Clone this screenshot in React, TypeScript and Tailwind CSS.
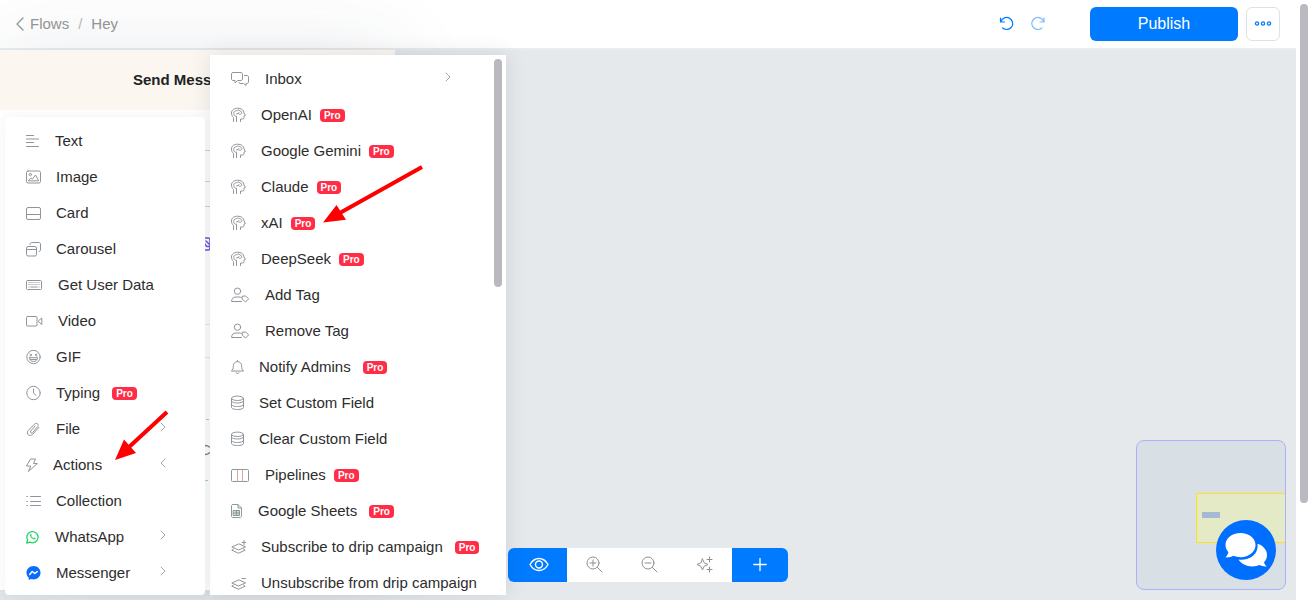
import type { ReactNode } from 'react';

type Item = {
  label: string;
  icon: ReactNode;
  pro?: 'near' | 'far';
  arrow?: 'left' | 'right';
};

type IconProps = { w: number; h?: number; className?: string; children: ReactNode };

function Icon({ w, h = 16, className = '', children }: IconProps) {
  return (
    <svg
      width={w}
      height={h}
      viewBox={`0 0 ${w} ${h}`}
      fill="none"
      stroke="currentColor"
      strokeLinecap="round"
      strokeLinejoin="round"
      className={`shrink-0 ${className}`}
      aria-hidden="true"
    >
      {children}
    </svg>
  );
}

const headIcon = (
  <Icon w={15}>
    <path d="M2.500 14.500v-4C1.200 9.300.5 7.800.5 6 .5 3 3 1.200 6.700 1.200c3.600 0 6 1.800 6.300 4.600l1.300 2.700-1.300.5v1.700c0 .8-.6 1.300-1.300 1.300H9.500v2.500" />
    <path d="M5.500 14.500V9.300C3.600 9.300 2.500 8 2.800 6.500 2.600 4.800 3.800 3.700 5.200 3.800c1.300-1 3-.8 3.800.1 1.400.1 2.100 1.400 1.600 2.500-.5 1-1.700 1.100-2.600.8M5.500 7L8 5.800" />
  </Icon>
);

const userTagIcon = (
  <Icon w={19}>
    <circle cx="6.500" cy="4.200" r="3.200" />
    <path d="M10.500 14.500H.6c0-3 1.800-4.500 4.400-4.500h3c.9 0 1.600.2 2.200.5" />
    <path d="M11.500 9.200l3.200-.2 3 2.800-3.200 3.200-3-2.600z" />
  </Icon>
);

const databaseIcon = (
  <Icon w={13}>
    <ellipse cx="6.500" cy="3.300" rx="6" ry="2.200" />
    <path d="M.5 3.500v9c0 1.200 2.700 2 6 2s6-.8 6-2v-9M.5 6c0 1.200 2.700 2 6 2s6-.8 6-2M.5 9.500c0 1.200 2.700 2 6 2s6-.8 6-2" />
  </Icon>
);

function LayersIcon({ minus }: { minus?: boolean }) {
  return (
    <Icon w={15}>
      <path d="M7.500 5L.8 8l6.700 3 6.700-3zM2.500 10L.8 11.200l6.700 3 6.700-3-1.700-1.200" />
      <path d={minus ? 'M11 3.500h3.500' : 'M11 3.500h4M13 1.500v4'} />
    </Icon>
  );
}

const MESSAGE_ITEMS: Item[] = [
  {
    label: 'Text',
    icon: (
      <Icon w={14}>
        <path d="M.5 2.500h7M.5 6h12M.5 9.500h7M.5 13.500h12" />
      </Icon>
    ),
  },
  {
    label: 'Image',
    icon: (
      <Icon w={15}>
        <rect x=".5" y="2" width="14" height="12" rx="1.500" />
        <circle cx="4.300" cy="5.500" r="1.200" />
        <path d="M2.500 11.500l2.500-2.500 1.500 1L9.500 6l3 5.500z" />
      </Icon>
    ),
  },
  {
    label: 'Card',
    icon: (
      <Icon w={15}>
        <rect x=".5" y="2.500" width="14" height="12" rx="1.500" />
        <path d="M.5 9.500h14" />
      </Icon>
    ),
  },
  {
    label: 'Carousel',
    icon: (
      <Icon w={15}>
        <rect x=".5" y="5.500" width="10" height="9.500" rx="1.500" />
        <path d="M.5 8.500h10M4 3.500V3c0-.8.700-1.500 1.500-1.500H13c.8 0 1.500.7 1.500 1.500v6c0 .8-.7 1.500-1.500 1.500" />
      </Icon>
    ),
  },
  {
    label: 'Get User Data',
    icon: (
      <Icon w={17}>
        <rect x=".5" y="3.500" width="15" height="9" rx="1" />
        <path d="M2.500 5.500h11M2.500 7.500h11" strokeDasharray="1 1" strokeLinecap="butt" />
        <path d="M2.500 10h1M4.500 10h7M12.500 10h1" strokeLinecap="butt" />
      </Icon>
    ),
  },
  {
    label: 'Video',
    icon: (
      <Icon w={17}>
        <rect x=".5" y="3.500" width="10.500" height="9.500" rx="1" />
        <path d="M12.800 7.500l3-2.500v6.500l-3-2.500z" />
      </Icon>
    ),
  },
  {
    label: 'GIF',
    icon: (
      <Icon w={15}>
        <circle cx="7.500" cy="8" r="6.700" />
        <path d="M3.500 8.700h8c0 2.300-1.700 3.800-4 3.800s-4-1.500-4-3.800zM4.500 10.500h6M4 5l2 1-2 1M11 5L9 6l2 1" />
      </Icon>
    ),
  },
  {
    label: 'Typing',
    pro: 'far',
    icon: (
      <Icon w={15}>
        <circle cx="7.500" cy="8" r="6.700" />
        <path d="M7.500 4v4l2.500 2.200" />
      </Icon>
    ),
  },
  {
    label: 'File',
    arrow: 'right',
    icon: (
      <Icon w={15}>
        <path d="M9 5L4.800 10c-1.100 1.400.5 2.800 1.800 1.600l5-6c1.900-2.500-1.200-4.600-3.300-2.300L2.200 9.600c-2.600 3.500 1.300 6.700 4.500 3.700L13 6.300" />
      </Icon>
    ),
  },
  {
    label: 'Actions',
    arrow: 'left',
    icon: (
      <Icon w={12}>
        <path d="M5 2h4.500L7.500 6.500h3.800L2.500 14.500l2.300-5.500H.8z" />
      </Icon>
    ),
  },
  {
    label: 'Collection',
    icon: (
      <Icon w={15}>
        <path d="M4.500 3.500h10M4.500 8.500h10M4.500 12.500h10M.8 3.500h.7M.8 8.500h.7M.8 12.500h.7" />
      </Icon>
    ),
  },
  {
    label: 'WhatsApp',
    arrow: 'right',
    icon: (
      <Icon w={14} className="text-[#25d366]">
        <path d="M.8 14l.8-3A5.600 5.600 0 1 1 3.900 13.200z" strokeWidth="1.300" />
        <path d="M4.200 5.200c.6-.7 1-.4 1.500 1.100l-.5.8c.6 1 1.300 1.700 2.400 2.100l.8-.8c1.500.6 1.600.9.8 1.700-2 1.400-6.200-2.800-5-4.900z" fill="currentColor" stroke="none" />
      </Icon>
    ),
  },
  {
    label: 'Messenger',
    arrow: 'right',
    icon: (
      <Icon w={15} className="text-[#0a6cff]">
        <path d="M7.500 1C3.500 1 .5 4 .5 7.700c0 2 .8 3.700 2.200 4.900v2.400l2.300-.9c.8.200 1.600.3 2.500.3 4 0 7-2.900 7-6.700S11.500 1 7.500 1z" fill="currentColor" stroke="none" />
        <path d="M3.700 9.500L6.200 6.500l2.600 2 2.500-2" stroke="#fff" strokeWidth="1.500" />
      </Icon>
    ),
  },
];

const ACTION_ITEMS: Item[] = [
  {
    label: 'Inbox',
    arrow: 'right',
    icon: (
      <Icon w={19}>
        <path d="M2 1.500h8c.8 0 1.500.7 1.500 1.500v5c0 .8-.7 1.500-1.500 1.500H6.500L4 12V9.500H2C1.200 9.500.5 8.800.5 8V3c0-.8.700-1.500 1.500-1.500z" />
        <path d="M13.500 4.500H16c.8 0 1.500.7 1.500 1.500v5c0 .8-.7 1.500-1.500 1.500h-1v2l-2.500-2H9.200c-.7 0-1.200-.5-1.200-1.200" />
      </Icon>
    ),
  },
  { label: 'OpenAI', pro: 'near', icon: headIcon },
  { label: 'Google Gemini', pro: 'near', icon: headIcon },
  { label: 'Claude', pro: 'near', icon: headIcon },
  { label: 'xAI', pro: 'near', icon: headIcon },
  { label: 'DeepSeek', pro: 'near', icon: headIcon },
  { label: 'Add Tag', icon: userTagIcon },
  { label: 'Remove Tag', icon: userTagIcon },
  {
    label: 'Notify Admins',
    pro: 'far',
    icon: (
      <Icon w={13}>
        <path d="M6.500 1.500v1M.7 11.800c1.400-1.200 1.600-2.300 1.600-5a4.200 4.200 0 0 1 8.400 0c0 2.700.2 3.800 1.600 5zM5 13.700c.3 1.200 2.700 1.200 3 0" />
      </Icon>
    ),
  },
  { label: 'Set Custom Field', icon: databaseIcon },
  { label: 'Clear Custom Field', icon: databaseIcon },
  {
    label: 'Pipelines',
    pro: 'near',
    icon: (
      <Icon w={19}>
        <rect x=".5" y="2.500" width="17" height="12" rx="1" />
        <path d="M6.500 3v11M11.500 3v11" className="stroke-[#d9a79a]" />
      </Icon>
    ),
  },
  {
    label: 'Google Sheets',
    pro: 'far',
    icon: (
      <Icon w={12}>
        <path d="M2 1.500h5l3.500 3.500v8c0 .8-.5 1.500-1.500 1.500H2c-1 0-1.500-.7-1.500-1.500V3c0-1 .5-1.500 1.500-1.500zM7 1.500V5h3.500" className="stroke-[#83a391]" />
        <rect x="2.500" y="7.500" width="6" height="5" className="fill-[#cfd8d3]" />
        <path d="M2.500 10h6M5.500 7.500v5" />
      </Icon>
    ),
  },
  { label: 'Subscribe to drip campaign', pro: 'far', icon: <LayersIcon /> },
  { label: 'Unsubscribe from drip campaign', icon: <LayersIcon minus /> },
];

function MenuItem({ item }: { item: Item }) {
  return (
    <li>
      <button type="button" className="flex h-9 w-full items-center whitespace-nowrap text-left">
        <span className="mr-[15px] text-[#8f959c]">{item.icon}</span>
        <span>{item.label}</span>
        {item.pro ? (
          <span
            className={`mt-px rounded bg-[#ff2d46] px-1 text-[10px] font-bold leading-[13px] text-white ${
              item.pro === 'far' ? 'ml-3' : 'ml-2'
            }`}
          >
            Pro
          </span>
        ) : null}
        {item.arrow ? (
          <Icon w={6} h={10} className="mb-1 ml-auto text-[#a2a7ac]">
            <path d={item.arrow === 'right' ? 'M1 1l4 4-4 4' : 'M5 1L1 5l4 4'} />
          </Icon>
        ) : null}
      </button>
    </li>
  );
}

function Header() {
  return (
    <header className="flex h-[50px] shrink-0 items-center border-b-2 border-[#eaedef] bg-white pl-4 pr-4">
      <nav className="flex flex-1 items-center text-[#969696]" aria-label="Breadcrumb">
        <a href="#flows" className="flex items-center gap-1.5">
          <Icon w={8} h={14}>
            <path d="M7 1L1 7l6 6" strokeWidth="1.300" />
          </Icon>
          Flows
        </a>
        <span className="mx-[9px] text-[#b9bdc1]">/</span>
        <a href="#hey">Hey</a>
      </nav>
      <div className="flex items-center text-[#007bff]">
        <button type="button" aria-label="Undo" className="mr-4">
          <Icon w={15}>
            <path d="M1.500 2v4h4M2 5.500A6 6 0 1 1 3.700 12" strokeWidth="1.200" />
          </Icon>
        </button>
        <button type="button" aria-label="Redo" className="mr-[45px] opacity-50">
          <Icon w={15}>
            <path d="M14 2v4h-4M13.500 5.500A6 6 0 1 0 11.800 12" strokeWidth="1.200" />
          </Icon>
        </button>
        <button
          type="button"
          className="h-[34px] w-[148px] rounded-md bg-[#007bff] text-base text-white"
        >
          Publish
        </button>
        <button
          type="button"
          aria-label="More"
          className="ml-2 flex size-[34px] items-center justify-center rounded-md border border-[#dee2e6]"
        >
          <Icon w={18} h={6}>
            <circle cx="3" cy="2.500" r="1.600" strokeWidth="1.300" />
            <circle cx="9" cy="2.500" r="1.600" strokeWidth="1.300" />
            <circle cx="15" cy="2.500" r="1.600" strokeWidth="1.300" />
          </Icon>
        </button>
      </div>
    </header>
  );
}

/** Side panel of the selected node; the add-content menus open over it. */
function NodePanel() {
  return (
    <section className="mb-2.5 flex w-[395px] shrink-0 flex-col bg-white shadow-[0_0_80px_rgba(40,60,90,0.1)]">
      <h1 className="bg-[#fbf6f0] pl-[133px] font-bold leading-[60px] text-[#222]">Send Message</h1>
      <div className="mx-4 h-[41px] border-b border-[#ced4da]" />
      <div className="mx-4 h-[31px] border-b border-[#ced4da]" />
      <div className="mx-4 h-[25px] border-b border-[#ced4da]" />
      <div className="mx-4 flex h-[118px] items-start border-b border-[#e8eaec] pl-[181px] pt-[30px] text-[#6a5be2]">
        <Icon w={14} h={14}>
          <rect x="1" y="1" width="12" height="12" rx="2" strokeWidth="1.500" />
          <path d="M9 4l3 3M8 7c1 3 3 3 5 2" strokeWidth="1.500" />
        </Icon>
      </div>
      <div className="mx-4 h-[33px] border-b border-[#e8eaec]" />
      <div className="ml-[206px] mr-4 h-[62px] border-b border-dashed border-[#a9c9ea]" />
      <div className="ml-[200px] mr-4 h-[61px] border-b border-dashed border-[#a9c9ea] leading-[60px] text-[#777]">
        Content
      </div>
    </section>
  );
}

function CanvasToolbar() {
  return (
    <div className="absolute bottom-[18px] left-1/2 flex h-[34px] -translate-x-1/2 overflow-hidden rounded-md bg-white text-[#8f8f8f]">
      <button type="button" aria-label="Preview" className="flex w-[59px] items-center justify-center bg-[#007bff] pl-0.5 text-white">
        <Icon w={20}>
          <path d="M1 7.500C3 4 6 1.500 10 1.500s7 2.500 9 6c-2 3.500-5 6-9 6s-7-2.500-9-6z" strokeWidth="1.400" />
          <circle cx="10" cy="7.500" r="3.500" strokeWidth="1.400" />
        </Icon>
      </button>
      <button type="button" aria-label="Zoom in" className="flex w-[55px] items-center justify-center">
        <Icon w={17} h={18}>
          <circle cx="7" cy="7" r="6" />
          <path d="M11.500 11.500l4.500 4.500M4 7h6M7 4v6" />
        </Icon>
      </button>
      <button type="button" aria-label="Zoom out" className="flex w-[55px] items-center justify-center">
        <Icon w={17} h={18}>
          <circle cx="7" cy="7" r="6" />
          <path d="M11.500 11.500l4.500 4.500M4 7h6" />
        </Icon>
      </button>
      <button type="button" aria-label="Arrange" className="flex w-[55px] items-center justify-center">
        <Icon w={17} h={18}>
          <path d="M6.500 3l1.700 3.800L12 8.500l-3.800 1.700L6.500 14l-1.700-3.800L1 8.500l3.800-1.700zM13.500 1v5M11 3.500h5M13.500 11v5M11 13.500h5" />
        </Icon>
      </button>
      <button type="button" aria-label="Add" className="flex w-14 items-center justify-center bg-[#007bff] text-white">
        <Icon w={14} h={14}>
          <path d="M7 .5v12M.8 6.500h12.400" strokeWidth="1.300" />
        </Icon>
      </button>
    </div>
  );
}

function MiniMap() {
  return (
    <div className="absolute bottom-2.5 right-2.5 size-[150px] overflow-hidden rounded-lg border border-[#abb2fb] bg-[#d8e0e6]">
      <div className="ml-[59px] mt-[52px] h-[50px] border border-r-0 border-[#ffe11a] bg-[#e5eac6] pl-[5px] pt-[18px]">
        <div className="h-1.5 w-[18px] bg-[#a6b9d2]" />
      </div>
    </div>
  );
}

function ChatButton() {
  return (
    <button
      type="button"
      aria-label="Chat"
      className="absolute bottom-5 right-5 flex size-[60px] items-center justify-center rounded-full bg-[#006fff]"
    >
      <svg width="42" height="34" viewBox="0 0 42 34" fill="#fff" aria-hidden="true">
        <path d="M15.500 0C24 0 30.500 5.300 30.500 12S24 24.200 15.500 24.200c-2.600 0-5-.5-7.200-1.400C6 24 3.500 24.600.3 24.300c1.700-1.500 2.800-3.400 3.100-5.100C1.600 17.200.5 14.700.5 12 .500 5.300 7 0 15.500 0z" />
        <path d="M32.600 10.800C38.200 12.600 42 17 42 22c0 2.800-1.100 5.300-3 7.200.3 1.500 1.200 2.900 2.700 4.300-2.900.2-5.200-.4-7.300-1.400-1.900.9-4.300 1.400-6.900 1.400-6.200 0-11.500-2.900-14-7 9.500 1.300 20.300-4 19.100-15.700z" />
      </svg>
    </button>
  );
}

function PointerArrows() {
  return (
    <svg
      width="440"
      height="480"
      viewBox="0 0 440 480"
      fill="#ff0000"
      stroke="#ff0000"
      className="pointer-events-none absolute left-0 top-0"
      aria-hidden="true"
    >
      <path d="M338 214L422 167M128 448L167 412" strokeWidth="4" />
      <path d="M323 222.500L336.500 205 346 219.800zM115 460L124 439.500 136 453z" stroke="none" />
    </svg>
  );
}

export default function App() {
  return (
    <div className="relative flex h-screen overflow-hidden bg-white font-['Liberation_Sans',Arial,sans-serif] text-[15px] text-[#2d2d2d]">
      <div className="relative flex min-w-0 flex-1 flex-col overflow-hidden">
        <Header />
        <main className="flex min-h-0 flex-1 bg-[#e5e9ec]">
          <NodePanel />
          <CanvasToolbar />
          <MiniMap />
          <ChatButton />
        </main>

        <div className="absolute bottom-[5px] left-[210px] top-[55px] flex w-[296px] overflow-hidden bg-white shadow-[0_0_20px_rgba(40,50,70,0.12)]">
          <ul className="min-w-0 flex-1 pl-[21px] pr-[43px] pt-1.5">
            {ACTION_ITEMS.map((item) => (
              <MenuItem key={item.label} item={item} />
            ))}
          </ul>
          <div className="w-3 pt-1">
            <div className="h-[228px] w-2 rounded-full bg-[#bab9bf]" />
          </div>
        </div>

        <ul className="absolute bottom-[5px] left-[5px] top-[117px] w-[200px] overflow-hidden rounded-sm bg-white pl-[21px] pr-[39px] pt-1.5 shadow-[0_0_12px_rgba(40,50,70,0.06)]">
          {MESSAGE_ITEMS.map((item) => (
            <MenuItem key={item.label} item={item} />
          ))}
        </ul>
      </div>

      <div className="w-4 pl-1 pt-1">
        <div className="h-[499px] w-2 rounded-full bg-[#bab9bf]" />
      </div>
      <PointerArrows />
    </div>
  );
}
